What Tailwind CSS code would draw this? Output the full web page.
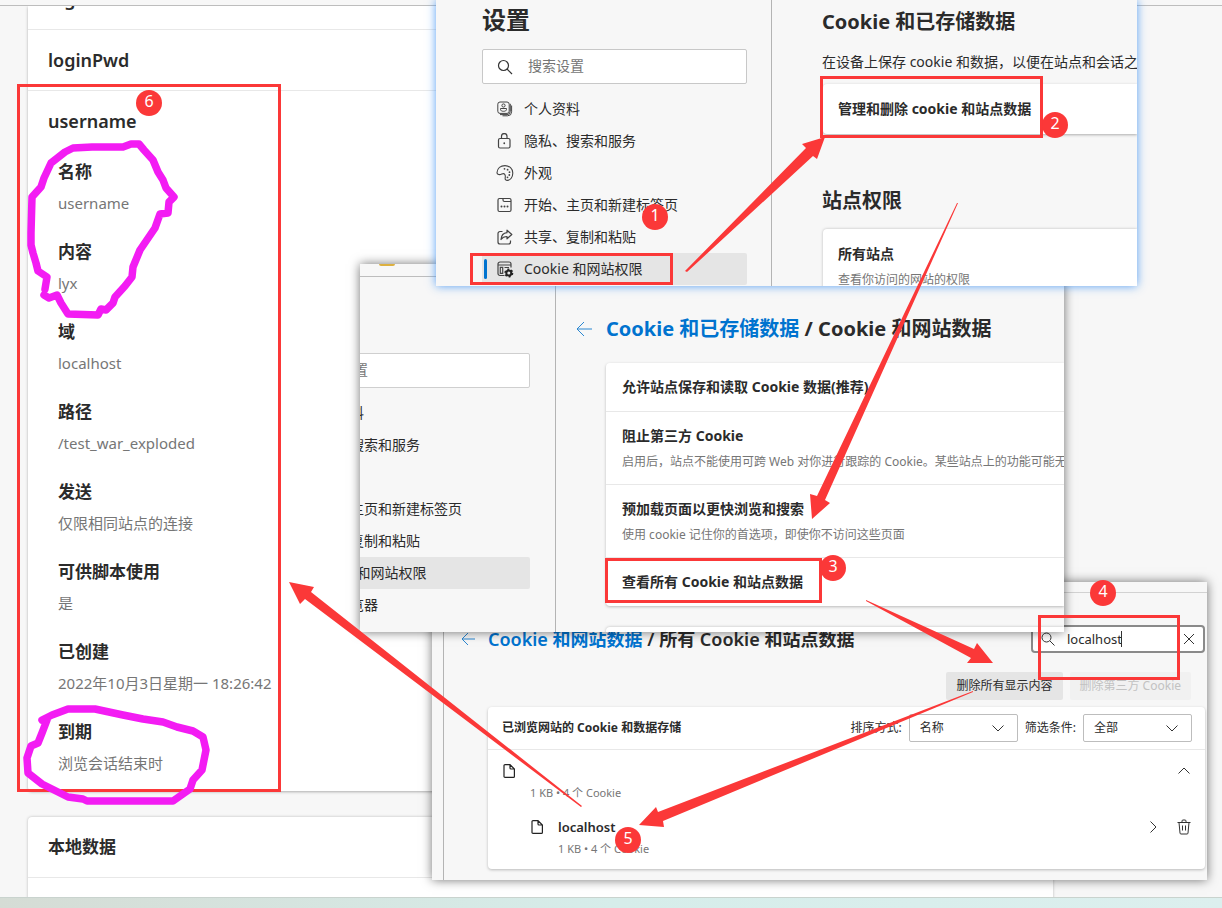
<!DOCTYPE html>
<html lang="zh-CN">
<head>
  <meta charset="UTF-8" />
  <meta name="viewport" content="width=device-width, initial-scale=1.0" />
  <title>Cookie 和网站数据</title>
  <script src="https://cdn.jsdelivr.net/npm/@tailwindcss/browser@4"></script>
</head>
<body class="relative flex h-screen flex-col overflow-hidden bg-[#f7f7f7] font-['Noto_Sans','Noto_Sans_CJK_SC',sans-serif] text-sm text-[#2b2b2b]">

  <!-- Cookie details page -->
  <div class="h-1.5 shrink-0 border-b border-[#bdbdbd]"></div>
  <main class="min-h-0 flex-1 overflow-hidden pl-7">
    <div class="mr-[169px]">
      <section class="rounded-b bg-white shadow-[0_1px_3px_rgba(0,0,0,0.3)]">
        <div class="flex h-6 items-end overflow-hidden border-b border-[#e8e8e8] px-5 pb-[18px]">
          <h2 class="text-lg leading-6 font-semibold">loginAct</h2>
        </div>
        <div class="flex h-[61px] items-center border-b border-[#e8e8e8] px-5">
          <h2 class="text-lg leading-6 font-semibold">loginPwd</h2>
        </div>
        <div class="flex h-[60px] items-center px-5">
          <h2 class="text-lg leading-6 font-semibold">username</h2>
        </div>
        <dl class="flex flex-col gap-[25px] pt-[9px] pb-4 pl-[30px] text-[15px] leading-6 text-[#767676]">
          <div>
            <dt class="mb-[7px] text-[17px] font-bold text-[#2b2b2b]">名称</dt>
            <dd>username</dd>
          </div>
          <div>
            <dt class="mb-[7px] text-[17px] font-bold text-[#2b2b2b]">内容</dt>
            <dd>lyx</dd>
          </div>
          <div>
            <dt class="mb-[7px] text-[17px] font-bold text-[#2b2b2b]">域</dt>
            <dd>localhost</dd>
          </div>
          <div>
            <dt class="mb-[7px] text-[17px] font-bold text-[#2b2b2b]">路径</dt>
            <dd>/test_war_exploded</dd>
          </div>
          <div>
            <dt class="mb-[7px] text-[17px] font-bold text-[#2b2b2b]">发送</dt>
            <dd>仅限相同站点的连接</dd>
          </div>
          <div>
            <dt class="mb-[7px] text-[17px] font-bold text-[#2b2b2b]">可供脚本使用</dt>
            <dd>是</dd>
          </div>
          <div>
            <dt class="mb-[7px] text-[17px] font-bold text-[#2b2b2b]">已创建</dt>
            <dd>2022年10月3日星期一 18:26:42</dd>
          </div>
          <div>
            <dt class="mb-[7px] text-[17px] font-bold text-[#2b2b2b]">到期</dt>
            <dd>浏览会话结束时</dd>
          </div>
        </dl>
      </section>
      <section class="mt-[26px] rounded-t bg-white shadow-[0_0_3px_rgba(0,0,0,0.25)]">
        <div class="flex h-[61px] items-center border-b border-[#e8e8e8] px-5">
          <h2 class="text-[17px] leading-6 font-bold">本地数据</h2>
        </div>
        <div class="h-8"></div>
      </section>
    </div>
  </main>
  <footer class="h-[11px] shrink-0 border-t border-[#c9d3ce] bg-linear-to-r from-[#d5dcd5] via-[#d6edea] to-[#dcefee]"></footer>

  <!-- All cookies window -->
  <div class="absolute top-[582px] left-[432px] z-10 w-[775px] bg-[#f7f7f7] shadow-[0_0_10px_rgba(0,0,0,0.55)]">
    <div class="h-[11px] border-b border-[#d2d2d2]"></div>
    <div class="flex">
      <div class="w-3 shrink-0 border-r border-[#b4b4b4]"></div>
      <div class="flex-1 pt-8 pr-0.5 pb-[11px] pl-[17px]">
        <div class="flex h-7 items-center">
          <a href="#" aria-label="返回" class="mr-[13px]">
            <svg class="h-3.5 w-3.5" viewBox="0 0 14 14" fill="none" stroke="#2b87d1"><path d="M14 7H1M7 1 1 7l6 6" /></svg>
          </a>
          <h2 class="text-lg leading-6 font-semibold whitespace-nowrap"><a href="#" class="text-[#0073cf]">Cookie 和网站数据</a> / 所有 Cookie 和站点数据</h2>
          <div class="ml-auto flex h-7 w-[174px] items-center rounded-sm border-2 border-[#8a8a8a] bg-white pr-2 pl-2 text-[13px]">
            <svg class="mr-3 h-3.5 w-3.5 shrink-0" viewBox="0 0 14 14" fill="none" stroke="#333"><circle cx="5.5" cy="5.5" r="4.5" /><path d="m9 9 4.500 4.500" /></svg>
            <input type="text" aria-label="搜索 Cookie" value="localhost" class="w-[54px] outline-none" />
            <span class="h-4 w-px bg-[#333]"></span>
            <button aria-label="清除" class="ml-auto">
              <svg class="h-3 w-3" viewBox="0 0 12 12" fill="none" stroke="#333"><path d="m1 1 10 10M11 1 1 11" /></svg>
            </button>
          </div>
        </div>
        <div class="mt-[19px] mr-3.5 flex justify-end gap-[7px] text-xs">
          <button class="h-7 rounded-xs bg-[#e5e5e5] px-2.5">删除所有显示内容</button>
          <button disabled class="h-7 rounded-xs bg-[#f1f1f1] px-2.5 text-[#c2c2c2]">删除第三方 Cookie</button>
        </div>
        <section class="mt-[7px] ml-[27px] rounded bg-white pb-3 shadow-[0_1px_3px_rgba(0,0,0,0.25)]">
          <div class="flex h-[43px] items-center border-b border-[#e8e8e8] pr-[13px] pl-3.5 text-xs">
            <h3 class="mr-auto font-bold">已浏览网站的 Cookie 和数据存储</h3>
            <label for="sort" class="mr-[7px]">排序方式:</label>
            <div class="relative mr-[7px]">
              <select id="sort" class="h-7 w-[109px] appearance-none rounded-xs border border-[#bdbdbd] bg-white pl-2.5">
                <option>名称</option>
              </select>
              <svg class="pointer-events-none absolute top-2 right-3.5 h-3 w-3" viewBox="0 0 12 12" fill="none" stroke="#333"><path d="m.5 3.500 5.500 5.500 5.500-5.500" /></svg>
            </div>
            <label for="filter" class="mr-[7px]">筛选条件:</label>
            <div class="relative">
              <select id="filter" class="h-7 w-[109px] appearance-none rounded-xs border border-[#bdbdbd] bg-white pl-2.5">
                <option>全部</option>
              </select>
              <svg class="pointer-events-none absolute top-2 right-3.5 h-3 w-3" viewBox="0 0 12 12" fill="none" stroke="#333"><path d="m.5 3.500 5.500 5.500 5.500-5.500" /></svg>
            </div>
          </div>
          <div class="pt-3 pr-[14px] pl-[15px]">
            <div class="flex h-[18px] items-center">
              <svg class="h-3.5 w-3" viewBox="0 0 12 14" fill="none" stroke="#222" stroke-width="1.200"><path d="M2 .6h5L11.400 5v7.400a1 1 0 0 1-1 1H2a1 1 0 0 1-1-1V1.600a1 1 0 0 1 1-1ZM7 .6V4a1 1 0 0 0 1 1h3.400" /></svg>
              <button aria-label="折叠" class="ml-auto">
                <svg class="h-3.5 w-3.5" viewBox="0 0 14 14" fill="none" stroke="#333"><path d="m1.500 9.500 5.500-5.500 5.500 5.500" /></svg>
              </button>
            </div>
            <p class="mt-[5px] ml-[27px] text-[11px] leading-4 text-[#767676]">1 KB • 4 个 Cookie</p>
          </div>
          <div class="mt-[17px] pr-[14px] pl-[43px]">
            <div class="flex h-[18px] items-center">
              <svg class="mr-[15px] h-3.5 w-3" viewBox="0 0 12 14" fill="none" stroke="#222" stroke-width="1.200"><path d="M2 .6h5L11.400 5v7.400a1 1 0 0 1-1 1H2a1 1 0 0 1-1-1V1.600a1 1 0 0 1 1-1ZM7 .6V4a1 1 0 0 0 1 1h3.400" /></svg>
              <h4 class="text-[13px] font-semibold">localhost</h4>
              <button aria-label="详细信息" class="mr-[18px] ml-auto">
                <svg class="h-3 w-3" viewBox="0 0 12 12" fill="none" stroke="#333"><path d="m3.500 .5 5.500 5.500-5.500 5.500" /></svg>
              </button>
              <button aria-label="删除">
                <svg class="h-4 w-3.5" viewBox="0 0 14 16" fill="none" stroke="#333"><path d="M.5 3.500h13M5 3.500V2a1 1 0 0 1 1-1h2a1 1 0 0 1 1 1v1.500M2 3.500l1 10.500a1 1 0 0 0 1 1h6a1 1 0 0 0 1-1l1-10.500M5.500 6.500v5M8.500 6.500v5" /></svg>
              </button>
            </div>
            <p class="mt-[5px] ml-[27px] text-[11px] leading-4 text-[#767676]">1 KB • 4 个 Cookie</p>
          </div>
        </section>
      </div>
    </div>
  </div>

  <!-- Cookie and site data window -->
  <div class="absolute top-[264px] left-[360px] z-20 w-[704px] shadow-[0_0_10px_rgba(0,0,0,0.55)]">
    <div class="h-[368px] overflow-hidden bg-[#f7f7f7]">
      <div class="h-[13px] border-b border-[#bdbdbd] pl-[19px]">
        <div class="h-0.5 w-4 rounded-b-full bg-[#dcb040]"></div>
      </div>
      <div class="flex h-full">
        <aside class="-ml-[140px] w-[336px] shrink-0 border-r border-[#b4b4b4] pt-[76px] pr-[25px] pl-[46px]">
          <input type="search" aria-label="搜索设置" placeholder="搜索设置" class="h-[35px] w-full rounded-xs border border-[#cfcfcf] bg-white pb-0.5 pl-[45px] outline-none placeholder:text-[#767676]" />
          <nav class="mt-[9px]">
            <a href="#" class="flex h-8 items-center pl-[42px]">个人资料</a>
            <a href="#" class="flex h-8 items-center pl-[42px]">隐私、搜索和服务</a>
            <a href="#" class="flex h-8 items-center pl-[42px]">外观</a>
            <a href="#" class="flex h-8 items-center pl-[42px]">开始、主页和新建标签页</a>
            <a href="#" class="flex h-8 items-center pl-[42px]">共享、复制和粘贴</a>
            <a href="#" class="flex h-8 items-center rounded-xs bg-[#e5e5e5] pl-[42px]">Cookie 和网站权限</a>
            <a href="#" class="flex h-8 items-center pl-[42px]">默认浏览器</a>
          </nav>
        </aside>
        <div class="min-w-0 flex-1 pt-[38px] pl-5 whitespace-nowrap">
          <div class="flex items-center">
            <a href="#" aria-label="返回" class="mr-3.5">
              <svg class="h-4 w-4" viewBox="0 0 16 16" fill="none" stroke="#2b87d1"><path d="M16 8H1M8 1 1 8l7 7" /></svg>
            </a>
            <h2 class="text-xl font-bold"><a href="#" class="text-[#0073cf]">Cookie 和已存储数据</a> / Cookie 和网站数据</h2>
          </div>
          <section class="mt-5 ml-[30px] rounded-l bg-white shadow-[0_1px_3px_rgba(0,0,0,0.25)]">
            <div class="flex h-[49px] items-center border-b border-[#e8e8e8] px-4">
              <h3 class="font-bold">允许站点保存和读取 Cookie 数据(推荐)</h3>
            </div>
            <div class="overflow-hidden border-b border-[#e8e8e8] pt-3.5 pb-3.5 pl-4">
              <h3 class="font-bold">阻止第三方 Cookie</h3>
              <p class="mt-2 text-xs text-[#767676]">启用后，站点不能使用可跨 Web 对你进行跟踪的 Cookie。某些站点上的功能可能无法正常工作。</p>
            </div>
            <div class="overflow-hidden border-b border-[#e8e8e8] pt-3.5 pb-3.5 pl-4">
              <h3 class="font-bold">预加载页面以更快浏览和搜索</h3>
              <p class="mt-2 text-xs text-[#767676]">使用 cookie 记住你的首选项，即使你不访问这些页面</p>
            </div>
            <div class="flex h-12 items-center px-4">
              <h3 class="font-bold">查看所有 Cookie 和站点数据</h3>
            </div>
          </section>
          <section class="mt-[21px] ml-[30px] h-12 rounded-l bg-white shadow-[0_0_3px_rgba(0,0,0,0.25)]"></section>
        </div>
      </div>
    </div>
  </div>

  <!-- Settings window -->
  <div class="absolute top-0 left-[436px] z-30 w-[701px] shadow-[0_0_9px_rgba(60,145,245,0.85)]">
    <div class="flex h-[286px] overflow-hidden bg-[#f7f7f7]">
      <aside class="w-[336px] shrink-0 border-r border-[#b4b4b4] pt-1 pr-6 pl-[46px]">
        <h1 class="text-2xl font-bold">设置</h1>
        <div class="mt-[13px] flex h-[35px] items-center rounded-xs border border-[#c8c8c8] bg-white pl-3.5">
          <svg class="mr-[15px] h-4 w-4 shrink-0" viewBox="0 0 16 16" fill="none" stroke="#333" stroke-width="1.200"><circle cx="6.500" cy="6.500" r="5" /><path d="m10 10 5 5" /></svg>
          <input type="search" aria-label="搜索设置" placeholder="搜索设置" class="w-full pb-0.5 outline-none placeholder:text-[#767676]" />
        </div>
        <nav class="mt-[9px]">
          <a href="#" class="flex h-8 items-center gap-[11px] pl-[15px]">
            <svg class="h-4 w-4" viewBox="0 0 16 16" fill="none" stroke="#444"><rect x=".8" y="1" width="11.400" height="11.400" rx="2.200" /><circle cx="6.500" cy="4.500" r="1.600" /><path d="M3.500 7.500h6v.8c0 1.400-1.200 2-3 2s-3-.6-3-2ZM13.300 2.800v7.500a3.300 3.300 0 0 1-3.300 3.300H3M14.600 4.500v6.300a4 4 0 0 1-4 4H5.500" /></svg>
            个人资料
          </a>
          <a href="#" class="flex h-8 items-center gap-[11px] pl-[15px]">
            <svg class="h-4 w-4" viewBox="0 0 16 16" fill="none" stroke="#444" stroke-width="1.200"><rect x="1.500" y="5.500" width="11.500" height="9.500" rx="1.500" /><path d="M4.500 5.500V3.300a2.750 2.750 0 0 1 5.500 0v2.200" /><circle cx="7.250" cy="10.250" r=".9" fill="#444" stroke="none" /></svg>
            隐私、搜索和服务
          </a>
          <a href="#" class="flex h-8 items-center gap-[11px] pl-[15px]">
            <svg class="h-4 w-4 overflow-visible" viewBox="0 0 16 16" fill="none" stroke="#444" stroke-width="1.100"><path d="M0 7.500C.4 3.300 3.600.6 8 .6c4.400 0 7.800 3.200 7.800 7.400 0 4.200-2.400 7.400-5.500 7.400-1.600 0-2.400-1-2.100-2.700.4-2.100-.2-3.900-1.700-4.100-1.100-.1-1.700.6-2.800.9C1.500 10 0 9.200 0 7.500Z" /><g fill="#444" stroke="none"><circle cx="7.500" cy="3.800" r=".9" /><circle cx="10.600" cy="4.700" r=".9" /><circle cx="12.500" cy="7.200" r=".9" /><circle cx="12.300" cy="10" r=".9" /><circle cx="10.500" cy="12.300" r=".9" /></g></svg>
            外观
          </a>
          <a href="#" class="flex h-8 items-center gap-[11px] pl-[15px]">
            <svg class="h-4 w-4" viewBox="0 0 16 16" fill="none" stroke="#444" stroke-width="1.200"><rect x="1" y="1.500" width="13" height="13" rx="1.500" /><path d="M6 1.500V3a1.500 1.500 0 0 0 1.500 1.500H14" /><g fill="#444" stroke="none"><circle cx="4.500" cy="9.500" r="1" /><circle cx="7.500" cy="9.500" r="1" /><circle cx="10.500" cy="9.500" r="1" /></g></svg>
            开始、主页和新建标签页
          </a>
          <a href="#" class="flex h-8 items-center gap-[11px] pl-[15px]">
            <svg class="h-4 w-4" viewBox="0 0 16 16" fill="none" stroke="#444" stroke-width="1.200" stroke-linejoin="round"><path d="M5.500 2.500H3a2 2 0 0 0-2 2v8.500a2 2 0 0 0 2 2h8.500a2 2 0 0 0 2-2v-1.500" /><path d="M10 1.200 14.800 5.500 10 9.800V7.500c-2.700 0-4.500.8-6 3 .3-3.500 2.300-6.500 6-6.800Z" /></svg>
            共享、复制和粘贴
          </a>
          <a href="#" class="flex h-8 items-center rounded-xs bg-[#e5e5e5] pl-0.5">
            <span class="mr-2.5 h-5 w-[3px] rounded-xs bg-[#0073cf]"></span>
            <svg class="mr-[11px] h-4 w-4 overflow-visible" viewBox="0 0 16 16" fill="none" stroke="#444" stroke-width="1.200"><path d="M7.500 14.500H3a2 2 0 0 1-2-2V3a2 2 0 0 1 2-2h9a2 2 0 0 1 2 2v3.500M1 4h13M3.300 6.300h2.400v6H3.300ZM7.500 6.500H12" /><circle cx="11.800" cy="12" r="2.500" stroke="#222" stroke-width="2" /><circle cx="11.800" cy="12" r="3.700" stroke="#222" stroke-width="1.600" stroke-dasharray="1.900 1.975" /></svg>
            Cookie 和网站权限
          </a>
        </nav>
      </aside>
      <div class="min-w-0 flex-1 pt-2 pl-[50px] whitespace-nowrap">
        <h2 class="text-xl font-bold">Cookie 和已存储数据</h2>
        <p class="mt-3.5 leading-6">在设备上保存 cookie 和数据，以便在站点和会话之间保持</p>
        <section class="mt-2.5 ml-px flex h-[50px] items-center rounded-l bg-white px-[15px] shadow-[0_1px_3px_rgba(0,0,0,0.3)]">
          <h3 class="font-bold">管理和删除 cookie 和站点数据</h3>
        </section>
        <h2 class="mt-[53px] text-xl font-bold">站点权限</h2>
        <section class="mt-3.5 ml-px rounded-l bg-white px-[15px] pt-[15px] pb-4 shadow-[0_0_3px_rgba(0,0,0,0.25)]">
          <h3 class="font-bold">所有站点</h3>
          <p class="mt-2 text-xs text-[#767676]">查看你访问的网站的权限</p>
        </section>
      </div>
    </div>
  </div>

  <!-- Step annotations -->
  <div class="pointer-events-none absolute inset-0 z-40 text-base leading-[22px] text-white">
    <div class="absolute top-[84px] left-[17px] h-[708px] w-[264px] border-3 border-[#fb3838]"></div>
    <div class="absolute top-[253px] left-[470px] h-8 w-[203px] border-3 border-[#fb3838]"></div>
    <div class="absolute top-[76px] left-[820px] h-[62px] w-[223px] border-3 border-[#fb3838]"></div>
    <div class="absolute top-[558px] left-[605px] h-[45px] w-[217px] border-3 border-[#fb3838]"></div>
    <div class="absolute top-[615px] left-[1038px] h-[65px] w-[142px] border-3 border-[#fb3838]"></div>
    <svg class="absolute top-0 left-0 h-[908px] w-[1222px]" viewBox="0 0 1222 908">
      <g fill="#fb3838">
        <path d="M685 271 806 148 802 144 825 137 817 159 813 156 687 272Z" />
        <path d="M957 203 817 496 810 494 812 519 830 503 825 500 958 203Z" />
        <path d="M866 600 974 649 977 643 993 663 967 663 971 658 866 601Z" />
        <path d="M973 691 658 812 656 807 639 825 664 827 663 821 973 692Z" />
        <path d="M582 806 311 592 314 587 289 582 300 604 305 599 581 807Z" />
      </g>
      <g fill="none" stroke="#f31cf3" stroke-width="7.500" stroke-linecap="round" stroke-linejoin="round">
        <path d="M45 289 47 277 38 271 36 263 33 253 31 245 31 233 32 197 41 187 44 178 51 163 65 152 73 148 92 147 123 147 131 144 139 144 144 150 153 160 158 172 163 180 166 188 174 197 169 202 168 213 160 214 155 228 140 250 133 267 132 277 125 286 115 297 113 303 106 310 101 309 98 315 68 314 61 303 57 295 49 298 44 295" />
        <path d="M42 720 52 715 68 709 95 709 123 715 143 719 163 722 177 727 193 731 203 737 206 750 202 770 193 780 190 789 173 801 87 801 83 799 68 797 42 784 28 773 27 758 31 746 38 743 42 733 47 720" />
      </g>
    </svg>
    <span class="absolute top-[90px] left-[136px] h-[26px] w-[26px] rounded-full bg-[#fb3838] text-center">6</span>
    <span class="absolute top-[204px] left-[642px] h-[26px] w-[26px] rounded-full bg-[#fb3838] text-center">1</span>
    <span class="absolute top-[112px] left-[1042px] h-[26px] w-[26px] rounded-full bg-[#fb3838] text-center">2</span>
    <span class="absolute top-[555px] left-[820px] h-[26px] w-[26px] rounded-full bg-[#fb3838] text-center">3</span>
    <span class="absolute top-[580px] left-[1090px] h-[26px] w-[26px] rounded-full bg-[#fb3838] text-center">4</span>
    <span class="absolute top-[827px] left-[615px] h-[26px] w-[26px] rounded-full bg-[#fb3838] text-center">5</span>
  </div>

</body>
</html>
